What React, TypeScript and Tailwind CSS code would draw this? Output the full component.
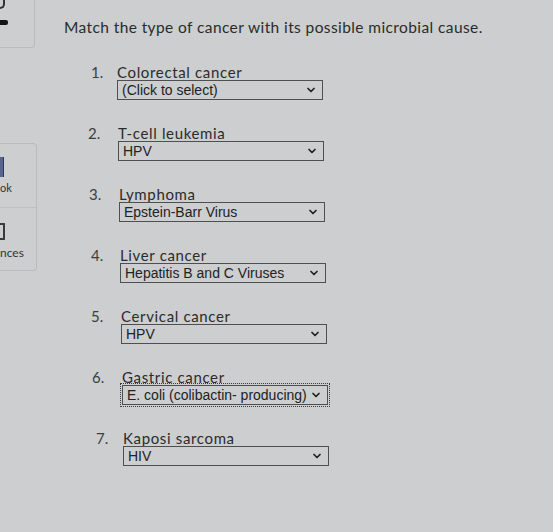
import { ChevronDown } from 'lucide-react';

// Matching question: each row has a cancer type and the chosen microbe
const ITEMS = [
  { n: '1.', label: 'Colorectal cancer', value: '(Click to select)', shift: 'ml-0', pad: 'pl-[4px]' },
  { n: '2.', label: 'T-cell leukemia', value: 'HPV', shift: 'ml-[1px]', pad: 'pl-0' },
  { n: '3.', label: 'Lymphoma', value: 'Epstein-Barr Virus', shift: 'ml-[2px]', pad: 'pl-0' },
  { n: '4.', label: 'Liver cancer', value: 'Hepatitis B and C Viruses', shift: 'ml-[3px]', pad: 'pl-[1px]' },
  { n: '5.', label: 'Cervical cancer', value: 'HPV', shift: 'ml-[4px]', pad: 'pl-0' },
  { n: '6.', label: 'Gastric cancer', value: 'E. coli (colibactin- producing)', shift: 'ml-[5px]', pad: 'pl-0', focus: true },
  { n: '7.', label: 'Kaposi sarcoma', value: 'HIV', shift: 'ml-[6px]', pad: 'pl-[3px]' },
];

export default function App() {
  return (
    <div
      className="relative w-[553px] h-[532px] overflow-hidden bg-[#ccced0] flex"
      style={{ fontFamily: 'Lato, "Open Sans", sans-serif' }}
    >
      {/* Left rail — tool cards, mostly off screen */}
      <div className="w-[37px] shrink-0 flex flex-col">
        <div className="h-[48px] w-[35px] border-r border-b border-[#b9bbbd] rounded-br-[4px] flex flex-col">
          <div className="w-[5px] h-[9px] border-r-2 border-b-2 border-[#333] rounded-br-[5px]" />
          <div className="w-[8px] h-[5px] bg-[#151515] rounded-r-[2px] mt-[11px]" />
        </div>
        <div className="mt-[95px] w-[37px] h-[128px] border border-l-0 border-[#b9bbbd] rounded-r-[4px] flex flex-col">
          <div className="h-[64px] border-b border-[#bfc1c3] flex flex-col pt-[13px]">
            <div className="w-[4px] h-[20px] bg-[#56648e] border-r border-[#2c3960]" />
            <span className="text-[11px] text-[#333] leading-none mt-[5px]">ok</span>
          </div>
          <div className="flex flex-col pt-[15px]">
            <div className="w-[5px] h-[17px] border-2 border-l-0 border-[#3a3a3a] rounded-r-[1px]" />
            <span className="text-[12px] text-[#333] leading-none mt-[7px]">nces</span>
          </div>
        </div>
      </div>

      {/* Question */}
      <div className="ml-[27px] pt-[17px] flex flex-col">
        <p className="text-[15.5px] leading-[20px] text-[#2b2b2b] tracking-[0.4px]">
          Match the type of cancer with its possible microbial cause.
        </p>
        <div className="mt-[27px] flex flex-col gap-[25px] pl-[23px]">
          {ITEMS.map((it) => (
            <div key={it.n} className={`flex ${it.shift}`}>
              <span className={`w-[30px] ${it.pad} text-[15px] leading-[16px] text-[#3d3d3d]`}>{it.n}</span>
              <div className="flex flex-col">
                <span className="text-[15px] leading-[16px] text-[#2b2b2b] tracking-[0.65px]">{it.label}</span>
                <div
                  className={`w-[206px] h-[20px] border border-[#4f4f4f] flex items-center justify-between pl-[4px] pr-[5px] ${
                    it.focus ? 'outline-1 outline-dotted outline-offset-[1px] outline-[#3a3a3a]' : ''
                  }`}
                  style={{ fontFamily: '"Liberation Sans", Arial, sans-serif' }}
                >
                  <span className="text-[14px] leading-none text-[#222] whitespace-nowrap">{it.value}</span>
                  <ChevronDown size={12} strokeWidth={3.5} className="text-[#222] shrink-0" />
                </div>
              </div>
            </div>
          ))}
        </div>
      </div>
    </div>
  );
}
